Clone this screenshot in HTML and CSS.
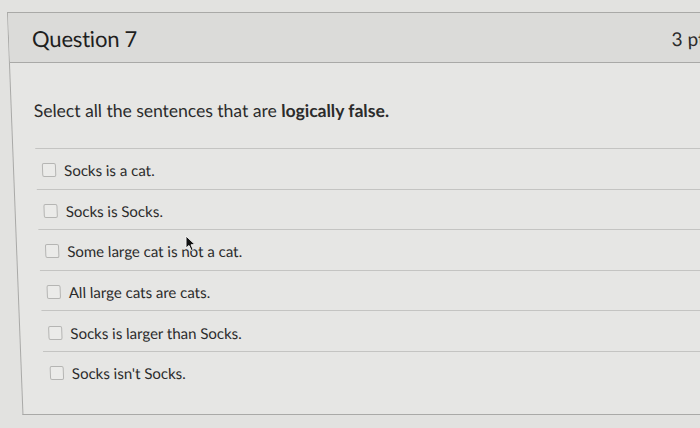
FILE: index.html
```html
<!DOCTYPE html>
<html>
<head>
<meta charset="utf-8">
<link rel="stylesheet" href="styles.css">
</head>
<body>
<div class="page">
  <div class="card">
    <div class="card-header">
      <h2 class="title">Question 7</h2>
      <span class="points">3 pts</span>
    </div>
    <div class="card-body">
      <p class="prompt">Select all the sentences that are <strong>logically false.</strong></p>
      <ul class="answers">
        <li class="answer"><span class="box"></span><span class="label">Socks is a cat.</span></li>
        <li class="answer"><span class="box"></span><span class="label">Socks is Socks.</span></li>
        <li class="answer"><span class="box"></span><span class="label">Some large cat is not a cat.</span></li>
        <li class="answer"><span class="box"></span><span class="label">All large cats are cats.</span></li>
        <li class="answer"><span class="box"></span><span class="label">Socks is larger than Socks.</span></li>
        <li class="answer"><span class="box"></span><span class="label">Socks isn't Socks.</span></li>
      </ul>
    </div>
  </div>
  <svg class="cursor" width="12" height="17" viewBox="0 0 12 17"><path d="M1 1 L1 13 L4 10.5 L6.2 15.5 L8.2 14.6 L6 9.8 L10 9.6 Z" fill="#111" stroke="#f2f2f2" stroke-width="1"/></svg>
</div>
</body>
</html>
```
FILE: styles.css
```css
html, body {
  margin: 0;
  padding: 0;
  overflow: hidden;
  background: #e2e2e0;
}
.page {
  position: relative;
  width: 700px;
  height: 428px;
  padding: 12px 0 0 7px;
  box-sizing: border-box;
  font-family: Lato, "Liberation Sans", sans-serif;
  color: #2b2b2b;
}
.card {
  width: 740px;
  border: 1px solid #a9a9a7;
  border-right: none;
  background: #e6e6e4;
  transform: skewX(2.2deg);
  transform-origin: 0 0;
}
.card-header {
  height: 50px;
  background: #dbdbd9;
  border-bottom: 1px solid #a9a9a7;
  display: flex;
  align-items: center;
  justify-content: space-between;
  padding: 1px 36px 0 23px;
  box-sizing: border-box;
}
.title {
  margin: 0;
  font-size: 22px;
  font-weight: 400;
  color: #1f1f1f;
  letter-spacing: -0.2px;
}
.points {
  font-size: 19px;
  color: #2b2b2b;
}
.card-body {
  padding: 36px 0 22px 22px;
}
.prompt {
  margin: 0 0 25px;
  font-size: 17.5px;
  line-height: 24px;
}
.prompt strong {
  font-weight: 700;
}
.answers {
  list-style: none;
  margin: 0;
  padding: 0;
}
.answer {
  border-top: 1px solid #c4c4c2;
  display: flex;
  align-items: center;
  gap: 8px;
  padding: 3px 0 0 6px;
  height: 36.6px;
  font-size: 15px;
}
.box {
  width: 12px;
  height: 12px;
  border: 1px solid #b5b5b3;
  border-radius: 2px;
  background: #ebebe9;
}
.cursor {
  position: absolute;
  left: 185px;
  top: 235px;
}
```
